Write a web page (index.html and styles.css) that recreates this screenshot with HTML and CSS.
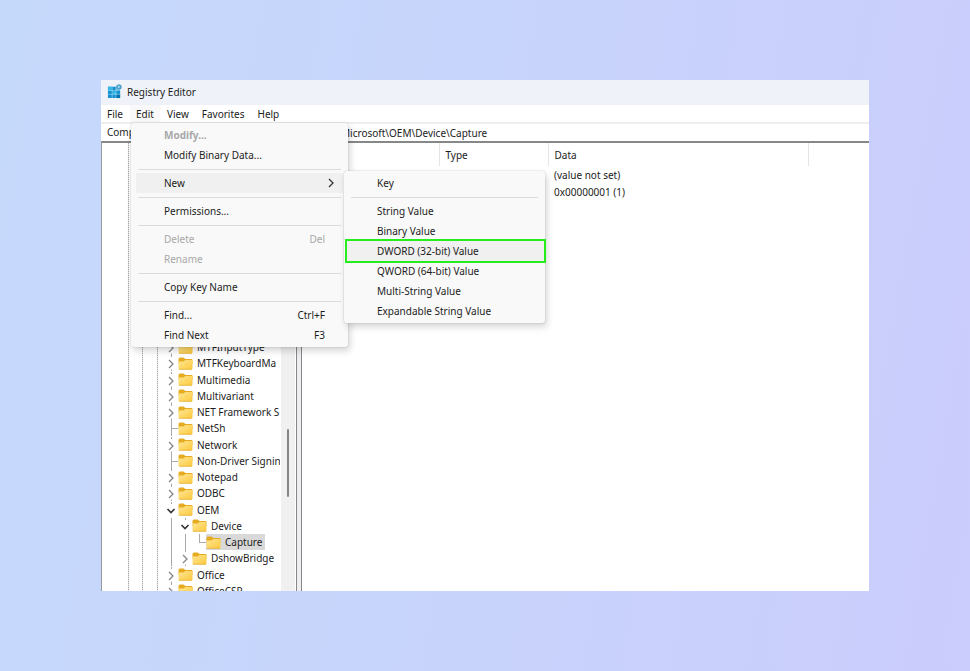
FILE: index.html
```html
<!DOCTYPE html>
<html lang="en">
<head>
<meta charset="utf-8">
<title>Registry Editor</title>
<link rel="stylesheet" href="styles.css">
</head>
<body>
<svg class="defs" aria-hidden="true">
  <defs>
    <linearGradient id="fold" x1="0" y1="0" x2="1" y2="1">
      <stop offset="0" stop-color="#ffe795"/><stop offset="1" stop-color="#fbc83c"/>
    </linearGradient>
    <symbol id="folder" viewBox="0 0 15 13">
      <path d="M0.5 2a1.5 1.5 0 0 1 1.500-1.500h3.500L7.500 2h6a1 1 0 0 1 1 1v4H.5z" fill="#e5ac22"/>
      <path d="M.5 4.500h5L7.500 3h6a1 1 0 0 1 1 1v7.500a1 1 0 0 1-1 1h-12a1 1 0 0 1-1-1z" fill="url(#fold)"/>
      <path d="M1 12.300h13" stroke="#e3ad35" stroke-width=".7"/>
    </symbol>
    <symbol id="closed" viewBox="0 0 14 16">
      <path d="M7.500 0v2M7.500 14.500v1.500" stroke="#a8a8a8" fill="none"/>
      <path d="M5 5l4 4-4 4" stroke="#858585" stroke-width="1.300" fill="none"/>
    </symbol>
    <symbol id="open" viewBox="0 0 14 16">
      <path d="M7.500 0v2" stroke="#a8a8a8"/>
      <path d="M3.500 7l3.500 3.500L10.500 7" stroke="#333" stroke-width="1.600" fill="none"/>
    </symbol>
  </defs>
</svg>
<main class="window">
  <header class="titlebar">
    <svg class="app-icon" viewBox="0 0 16 16" aria-hidden="true">
      <path d="M1 3h9v3h4v9H1z" fill="#1290cf"/>
      <path d="M1 3h4v4H1zM6 8h4v3H6z" fill="#35b8e8"/>
      <path d="M10 11h4v4h-4z" fill="#0870a8"/>
      <path d="M5.500 3v12M9.500 3v12M1 7h13M1 11h13" stroke="#a5e2f8" stroke-width=".6"/>
      <path d="M12.500.7l2.500 1v3l-2.500 1-2-1v-3z" fill="#5fb5dc" stroke="#2682b3" stroke-width=".8"/>
      <path d="M12.500 2v2" stroke="#e1f6ff"/>
    </svg>
    <h1>Registry Editor</h1>
  </header>
  <nav class="menubar">
    <button>File</button>
    <div class="menu-anchor">
      <button class="active">Edit</button>
      <div class="menu edit-menu">
        <button class="default" disabled>Modify...</button>
        <button>Modify Binary Data...</button>
        <hr>
        <div class="menu-anchor">
          <button class="hover">New
            <svg class="arrow" viewBox="0 0 6 10" aria-hidden="true"><path d="M1 1l4 4-4 4" fill="none" stroke="#333" stroke-width="1.300"/></svg>
          </button>
          <div class="menu new-menu">
            <button>Key</button>
            <hr>
            <button>String Value</button>
            <button>Binary Value</button>
            <button class="marked">DWORD (32-bit) Value</button>
            <button>QWORD (64-bit) Value</button>
            <button>Multi-String Value</button>
            <button>Expandable String Value</button>
          </div>
        </div>
        <hr>
        <button>Permissions...</button>
        <hr>
        <button disabled>Delete <span>Del</span></button>
        <button disabled>Rename</button>
        <hr>
        <button>Copy Key Name</button>
        <hr>
        <button>Find... <span>Ctrl+F</span></button>
        <button>Find Next <span>F3</span></button>
      </div>
    </div>
    <button>View</button>
    <button>Favorites</button>
    <button>Help</button>
  </nav>
  <div class="address">
    <label for="path">Computer\HKEY_LOCAL_MACHINE\SOFTWARE\</label>
    <input id="path" value="Microsoft\OEM\Device\Capture">
  </div>
  <div class="panes">
    <section class="tree" aria-label="Keys">
      <ul>
        <li><svg class="cell"><use href="#closed"/></svg><svg class="folder"><use href="#folder"/></svg><span>MTFInputType</span></li>
        <li><svg class="cell"><use href="#closed"/></svg><svg class="folder"><use href="#folder"/></svg><span>MTFKeyboardMa</span></li>
        <li><svg class="cell"><use href="#closed"/></svg><svg class="folder"><use href="#folder"/></svg><span>Multimedia</span></li>
        <li><svg class="cell"><use href="#closed"/></svg><svg class="folder"><use href="#folder"/></svg><span>Multivariant</span></li>
        <li><svg class="cell"><use href="#closed"/></svg><svg class="folder"><use href="#folder"/></svg><span>NET Framework S</span></li>
        <li><i class="cell line branch"></i><svg class="folder"><use href="#folder"/></svg><span>NetSh</span></li>
        <li><svg class="cell"><use href="#closed"/></svg><svg class="folder"><use href="#folder"/></svg><span>Network</span></li>
        <li><i class="cell line branch"></i><svg class="folder"><use href="#folder"/></svg><span>Non-Driver Signin</span></li>
        <li><svg class="cell"><use href="#closed"/></svg><svg class="folder"><use href="#folder"/></svg><span>Notepad</span></li>
        <li><svg class="cell"><use href="#closed"/></svg><svg class="folder"><use href="#folder"/></svg><span>ODBC</span></li>
        <li><svg class="cell"><use href="#open"/></svg><svg class="folder"><use href="#folder"/></svg><span>OEM</span></li>
        <li><i class="cell line"></i><svg class="cell"><use href="#open"/></svg><svg class="folder"><use href="#folder"/></svg><span>Device</span></li>
        <li><i class="cell line"></i><i class="cell line"></i><i class="cell elbow"></i><b class="selected"><svg class="folder"><use href="#folder"/></svg><span>Capture</span></b></li>
        <li><i class="cell line"></i><svg class="cell"><use href="#closed"/></svg><svg class="folder"><use href="#folder"/></svg><span>DshowBridge</span></li>
        <li><svg class="cell"><use href="#closed"/></svg><svg class="folder"><use href="#folder"/></svg><span>Office</span></li>
        <li><svg class="cell"><use href="#closed"/></svg><svg class="folder"><use href="#folder"/></svg><span>OfficeCSP</span></li>
      </ul>
    </section>
    <div class="scrollbar"><div class="thumb"></div></div>
    <div class="splitter"></div>
    <section class="values">
      <table>
        <colgroup><col class="c-name"><col class="c-type"><col class="c-data"><col></colgroup>
        <thead><tr><th></th><th>Type</th><th>Data</th><th></th></tr></thead>
        <tbody>
          <tr><td></td><td></td><td>(value not set)</td><td></td></tr>
          <tr><td></td><td></td><td>0x00000001 (1)</td><td></td></tr>
        </tbody>
      </table>
    </section>
  </div>
</main>
</body>
</html>
```
FILE: styles.css
```css
* { box-sizing: border-box; }

body {
  margin: 0;
  height: 100vh;
  padding: 80px 101px;
  background: linear-gradient(100deg, #c5d9fb, #c7d4fb 45%, #cacffc 85%, #cbcdfc);
  font: 10px/16px "Noto Sans", "Open Sans", sans-serif;
  color: #1c1c1c;
}

.defs { position: absolute; width: 0; height: 0; }

button, input {
  font: inherit;
  color: inherit;
  border: 0;
  background: none;
  padding: 0;
}

.window {
  display: flex;
  flex-direction: column;
  height: 100%;
  background: #fff;
}

.titlebar {
  display: flex;
  align-items: center;
  gap: 5px;
  height: 25px;
  padding: 0 6px 2px;
  background: #eff3f9;
}
.titlebar h1 { margin: 0; font-size: 10px; font-weight: 400; }
.app-icon { width: 15px; height: 15px; }

.menubar {
  display: flex;
  gap: 1px;
  height: 19px;
  border-bottom: 2px solid #eee;
}
.menubar > button, .active { height: 17px; padding: 0 6px; }
.active { background: #f8f8f8; }
.menu-anchor { position: relative; }

.menu {
  position: absolute;
  padding: 2px 0;
  background: #f9f9f9;
  border-radius: 3px;
  box-shadow: 0 0 2px rgba(0, 0, 0, .2), 2px 4px 7px rgba(0, 0, 0, .16);
}
.edit-menu { top: 18px; left: 1px; width: 217px; z-index: 2; }
.new-menu { top: -2px; left: 213px; width: 201px; }
.menu button {
  display: flex;
  align-items: center;
  justify-content: space-between;
  width: 100%;
  height: 20px;
  padding: 0 23px 0 33px;
  text-align: left;
}
.menu button:disabled { color: #a8a8a8; }
.menu .default { font-weight: 700; }
.menu hr {
  height: 1px;
  margin: 4px 7px 3px;
  border: 0;
  background: #dcdcdc;
}
.menu .hover {
  width: auto;
  margin: 0 5px;
  min-width: 207px;
  padding: 0 9px 0 28px;
  background: #f0f0f0;
}
.arrow { width: 6px; height: 10px; }
.menu .marked {
  height: 24px;
  margin: -2px 0 -2px 1px;
  padding-left: 30px;
  border: 2px solid #26ee1c;
  background: #f0f0f0;
}

.address {
  display: grid;
  grid-template-columns: 234px 1fr;
  height: 17px;
  padding: 0 6px;
}
.address input { outline: 0; }

.panes {
  display: flex;
  flex: 1;
  min-height: 0;
  border-top: 2px solid #858789;
  border-left: 1px solid #999;
}

.tree {
  display: flex;
  flex-direction: column;
  flex: 0 0 178px;
  padding-top: 196px;
  overflow: hidden;
  background:
    linear-gradient(#aaa 50%, #ddd 50%) 26px 0 / 1px 2px repeat-y,
    linear-gradient(#aaa 50%, #ddd 50%) 40px 0 / 1px 2px repeat-y,
    linear-gradient(#aaa 50%, #ddd 50%) 55px 0 / 1px 2px repeat-y;
}
.tree ul {
  display: grid;
  grid-auto-rows: 1fr;
  flex: 1 0 auto;
  margin: 0 0 -8px;
  padding: 0 0 0 62px;
  list-style: none;
}
.tree li { display: flex; align-items: center; white-space: nowrap; }
.cell { flex: 0 0 14px; width: 14px; height: 16px; }
.line { background: linear-gradient(#aaa, #aaa) 7px 0 / 1px 100% no-repeat; }
.branch {
  background:
    linear-gradient(#aaa, #aaa) 7px 0 / 1px 100% no-repeat,
    linear-gradient(#aaa, #aaa) 7px 8px / 7px 1px no-repeat;
}
.elbow {
  background:
    linear-gradient(#aaa, #aaa) 7px 0 / 1px 8px no-repeat,
    linear-gradient(#aaa, #aaa) 7px 8px / 7px 1px no-repeat;
}
.folder { flex: none; width: 15px; height: 13px; margin-right: 4px; }
.selected {
  display: flex;
  align-items: center;
  padding-right: 3px;
  background: #d9d9d9;
  font-weight: 400;
}

.scrollbar {
  display: flex;
  flex-direction: column;
  flex: 0 0 14px;
  margin-left: 1px;
  padding: 286px 6px 94px;
  background: #f0f0f0;
}
.thumb { flex: 1; background: #858585; border-radius: 1px; }
.splitter {
  flex: 0 0 6px;
  margin-left: 1px;
  border: solid #85878a;
  border-width: 0 1px;
  background: #eee;
}

.values { flex: 1; min-width: 0; }
table { width: 100%; table-layout: fixed; border-collapse: collapse; }
.c-name { width: 137px; }
.c-type { width: 109px; }
.c-data { width: 260px; }
th, td { padding: 0 6px; text-align: left; font-weight: 400; white-space: nowrap; }
th { height: 23px; border-right: 1px solid #e4e4e4; }
th:last-child { border-right: 0; }
td { height: 17px; }
```
